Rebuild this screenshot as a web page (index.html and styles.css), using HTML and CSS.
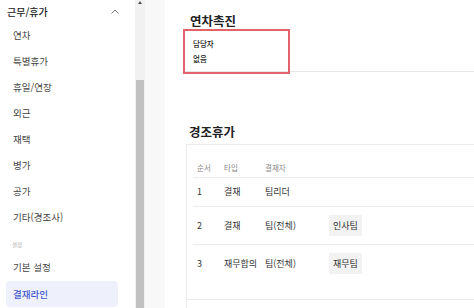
FILE: index.html
```html
<!DOCTYPE html>
<html lang="ko">
<head>
    <meta charset="UTF-8">
    <title>결재라인 설정</title>
    <link rel="stylesheet" href="styles.css">
</head>
<body>

<div class="layout">
    <nav class="sidebar">
        <div class="group-head">
            <span>근무/휴가</span>
            <svg class="chevron" width="8" height="5" viewBox="0 0 8 5"><path d="M0.5 4.5 L4 1 L7.5 4.5" fill="none" stroke="#777" stroke-width="1"/></svg>
        </div>
        <a class="nav-item">연차</a>
        <a class="nav-item">특별휴가</a>
        <a class="nav-item">휴일/연장</a>
        <a class="nav-item">외근</a>
        <a class="nav-item">재택</a>
        <a class="nav-item">병가</a>
        <a class="nav-item">공가</a>
        <a class="nav-item">기타(경조사)</a>
        <div class="nav-label">설정</div>
        <a class="nav-item">기본 설정</a>
        <a class="nav-item active">결재라인</a>
    </nav>

    <div class="scrollbar">
        <div class="scroll-arrow"></div>
        <div class="scroll-thumb"></div>
    </div>

    <main class="main">
        <div class="card">
            <h2 class="section-title">연차촉진</h2>
            <div class="info">
                <p>담당자</p>
                <p>없음</p>
                <div class="highlight"></div>
            </div>

            <h2 class="section-title second">경조휴가</h2>
            <div class="line-box">
                <div class="row head">
                    <span class="c1">순서</span>
                    <span class="c2">타입</span>
                    <span class="c3">결재자</span>
                </div>
                <div class="row">
                    <span class="c1">1</span>
                    <span class="c2">결재</span>
                    <span class="c3">팀리더</span>
                </div>
                <div class="row">
                    <span class="c1">2</span>
                    <span class="c2">결재</span>
                    <span class="c3">팀(전체)</span>
                    <span class="c4"><span class="tag">인사팀</span></span>
                </div>
                <div class="row last">
                    <span class="c1">3</span>
                    <span class="c2">재무합의</span>
                    <span class="c3">팀(전체)</span>
                    <span class="c4"><span class="tag">재무팀</span></span>
                </div>
                <div class="box-foot"></div>
            </div>
        </div>
    </main>
</div>

</body>
</html>
```

FILE: styles.css
```css
* {
    box-sizing: border-box;
}
body {
    margin: 0;
    font-family: "Noto Sans CJK KR", "Noto Sans", sans-serif;
    color: #333;
    background-color: #fff;
    overflow: hidden;
}
p {
    margin: 0;
}
.layout {
    display: flex;
    height: 308px;
}

/* menu de gauche */
.sidebar {
    width: 135px;
    flex-shrink: 0;
    display: flex;
    flex-direction: column;
    background-color: #fff;
}
.group-head {
    display: flex;
    align-items: center;
    justify-content: space-between;
    height: 22px;
    padding: 0 16px 0 7px;
    font-size: 10px;
    font-weight: 500;
    color: #222;
}
.nav-item {
    display: flex;
    align-items: center;
    height: 26px;
    margin: 0 17px 0 6px;
    padding-left: 7px;
    font-size: 9.5px;
    color: #444;
    border-radius: 4px;
}
.nav-label {
    height: 18px;
    margin-top: 6px;
    padding-left: 12px;
    display: flex;
    align-items: center;
    font-size: 5.5px;
    color: #aaa;
}
.nav-item.active {
    margin-top: 1px;
    background-color: #eef1fc;
    color: #4457d0;
    font-weight: 500;
}

/* barre de défilement */
.scrollbar {
    width: 10px;
    flex-shrink: 0;
    display: flex;
    flex-direction: column;
    align-items: center;
    background-color: #f1f1f1;
}
.scroll-arrow {
    width: 0;
    height: 0;
    border-left: 2.5px solid transparent;
    border-right: 2.5px solid transparent;
    border-bottom: 3px solid #505050;
    margin-top: 1px;
}
.scroll-thumb {
    width: 8px;
    margin-top: 76px;
    flex: 1;
    background-color: #c1c1c1;
}

/* contenu */
.main {
    flex: 1;
    display: flex;
    padding-left: 20px;
    background-color: #f8f8f9;
}
.card {
    flex: 1;
    background-color: #fff;
    padding: 12px 0 0 18px;
}
.section-title {
    margin: 0 0 0 7px;
    font-size: 12.5px;
    line-height: 17px;
    font-weight: 700;
    color: #222;
}
.section-title.second {
    margin: 51px 0 0 6px;
}
.info {
    position: relative;
    height: 43px;
    padding: 7px 10px 0;
    border-bottom: 1px solid #e6e6e6;
    font-size: 7.5px;
    line-height: 15px;
    font-weight: 500;
    color: #222;
}
.highlight {
    position: absolute;
    left: 0;
    top: 0;
    width: 107px;
    height: 45px;
    border-style: solid;
    border-width: 2px;
    border-color: #e3636d;
}
.line-box {
    margin: 4px 0 0 3px;
    padding: 17px 0 0 6px;
    border-top: 1px solid #ececec;
    border-left: 1px solid #ececec;
    height: 165px;
}
.row {
    display: flex;
    align-items: center;
    padding: 8px 0;
    border-bottom: 1px solid #ececec;
    font-size: 9px;
    line-height: 12px;
    color: #333;
}
.row.head {
    padding: 0 0 3px;
    font-size: 7.5px;
    color: #888;
}
.row.last {
    border-bottom: none;
}
.c1 {
    width: 28px;
    padding-left: 4px;
}
.c2 {
    width: 40px;
    padding-left: 3px;
}
.c3 {
    width: 64px;
    padding-left: 4px;
}
.c4 {
    padding-left: 4px;
}
.tag {
    display: inline-block;
    padding: 4.5px 4px;
    background-color: #f2f2f2;
    color: #333;
}
.box-foot {
    margin: 17px 0 0 -6px;
    border-top: 1px solid #ececec;
}
```
